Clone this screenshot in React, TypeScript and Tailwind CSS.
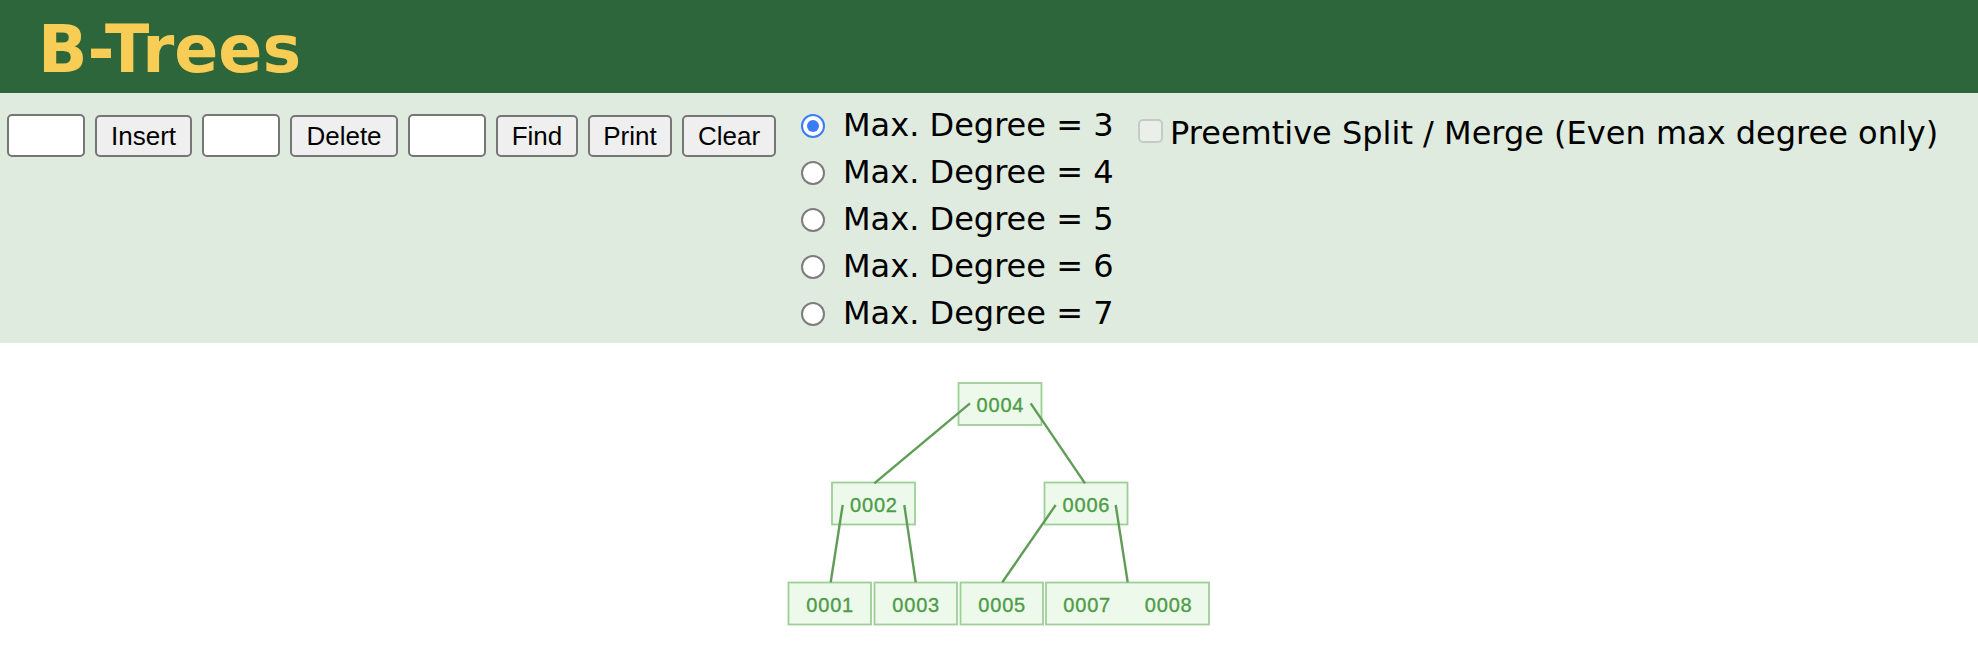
import React from "react";

const verdana = { fontFamily: '"DejaVu Sans", Verdana, sans-serif' };
const arial = { fontFamily: '"Liberation Sans", Arial, sans-serif' };

function Field() {
  return <input type="text" className="w-[78px] h-[43px] bg-white border-2 border-[#767676] rounded-[5px] outline-none" />;
}

function Btn({ label, w }: { label: string; w: string }) {
  return (
    <button
      className={`${w} h-[42px] bg-[#efefef] border-2 border-[#767676] rounded-[5px] text-[26px] leading-none text-black flex items-center justify-center`}
      style={arial}
    >
      {label}
    </button>
  );
}

function Radio({ checked, n }: { checked: boolean; n: number }) {
  return (
    <div className="h-[47px] flex items-center">
      {checked ? (
        <span className="w-[24px] h-[24px] rounded-full border-[2.5px] border-[#3a7cf3] bg-white flex items-center justify-center shrink-0">
          <span className="w-[12px] h-[12px] rounded-full bg-[#3a7cf3]" />
        </span>
      ) : (
        <span className="w-[24px] h-[24px] rounded-full border-2 border-[#7d7d7d] bg-white shrink-0" />
      )}
      <span className="ml-[18px] text-[32px] leading-[47px] text-black whitespace-nowrap" style={verdana}>
        Max. Degree = {n}
      </span>
    </div>
  );
}

type Node = { x: number; y: number; w: number; keys: string[] };

const nodes: Node[] = [
  { x: 958.5, y: 383, w: 83, keys: ["0004"] },
  { x: 832, y: 482.5, w: 83, keys: ["0002"] },
  { x: 1044.5, y: 482.5, w: 83, keys: ["0006"] },
  { x: 788.5, y: 582.5, w: 82.5, keys: ["0001"] },
  { x: 874.5, y: 582.5, w: 82.5, keys: ["0003"] },
  { x: 960.5, y: 582.5, w: 82.5, keys: ["0005"] },
  { x: 1046, y: 582.5, w: 163, keys: ["0007", "0008"] },
];

const edges: [number, number, number, number][] = [
  [970, 403.3, 874.3, 483.3],
  [1030.7, 403.3, 1085, 483.3],
  [842.7, 505, 830.7, 582.3],
  [904.3, 505, 915.7, 582.3],
  [1055.7, 505, 1002.3, 582.3],
  [1115.7, 505, 1127.7, 582.3],
];

function Tree() {
  return (
    <svg width="1978" height="305" viewBox="0 343 1978 305" className="block">
      {nodes.map((n, i) => (
        <g key={i}>
          <rect x={n.x} y={n.y} width={n.w} height={42} fill="#edf9eb" stroke="#9dcf96" strokeWidth={1.8} />
          {n.keys.map((k, j) => {
            const cw = n.w / n.keys.length;
            return (
              <text
                key={j}
                x={n.x + cw * j + cw / 2 + 0.4}
                y={n.y + 29}
                textAnchor="middle"
                fontSize={20}
                letterSpacing={0.8}
                fill="#4e9c48"
                stroke="#4e9c48"
                strokeWidth={0.35}
                style={arial}
              >
                {k}
              </text>
            );
          })}
        </g>
      ))}
      {edges.map((e, i) => (
        <line key={i} x1={e[0]} y1={e[1]} x2={e[2]} y2={e[3]} stroke="#5f9d56" strokeWidth={2.4} />
      ))}
    </svg>
  );
}

export default function App() {
  return (
    <div className="w-[1978px] h-[648px] bg-white overflow-hidden">
      <div className="h-[93px] bg-[#2c663a] pl-[38px] pt-[1px]">
        <h1 className="text-[65px] font-bold text-[#f8cd55] leading-normal" style={verdana}>
          B-Trees
        </h1>
      </div>
      <div className="h-[250px] bg-[#e0ebdf] flex items-start pl-[7px] pt-[9px]">
        <div className="flex items-center gap-[10px] mt-[12px]">
          <Field />
          <Btn label="Insert" w="w-[97px]" />
          <Field />
          <Btn label="Delete" w="w-[108px]" />
          <Field />
          <Btn label="Find" w="w-[82px]" />
          <Btn label="Print" w="w-[84px]" />
          <Btn label="Clear" w="w-[94px]" />
        </div>
        <div className="ml-[25px] w-[337px] flex flex-col">
          <Radio checked n={3} />
          <Radio checked={false} n={4} />
          <Radio checked={false} n={5} />
          <Radio checked={false} n={6} />
          <Radio checked={false} n={7} />
        </div>
        <div className="mt-[12.6px] flex items-start">
          <span className="mt-[4.5px] w-[25px] h-[24px] rounded-[5px] border-2 border-[#c4cac4] bg-[#eaefea] shrink-0" />
          <span className="ml-[7px] text-[32px] leading-[37px] text-black whitespace-nowrap" style={verdana}>
            Preemtive Split / Merge (Even max degree only)
          </span>
        </div>
      </div>
      <Tree />
    </div>
  );
}
